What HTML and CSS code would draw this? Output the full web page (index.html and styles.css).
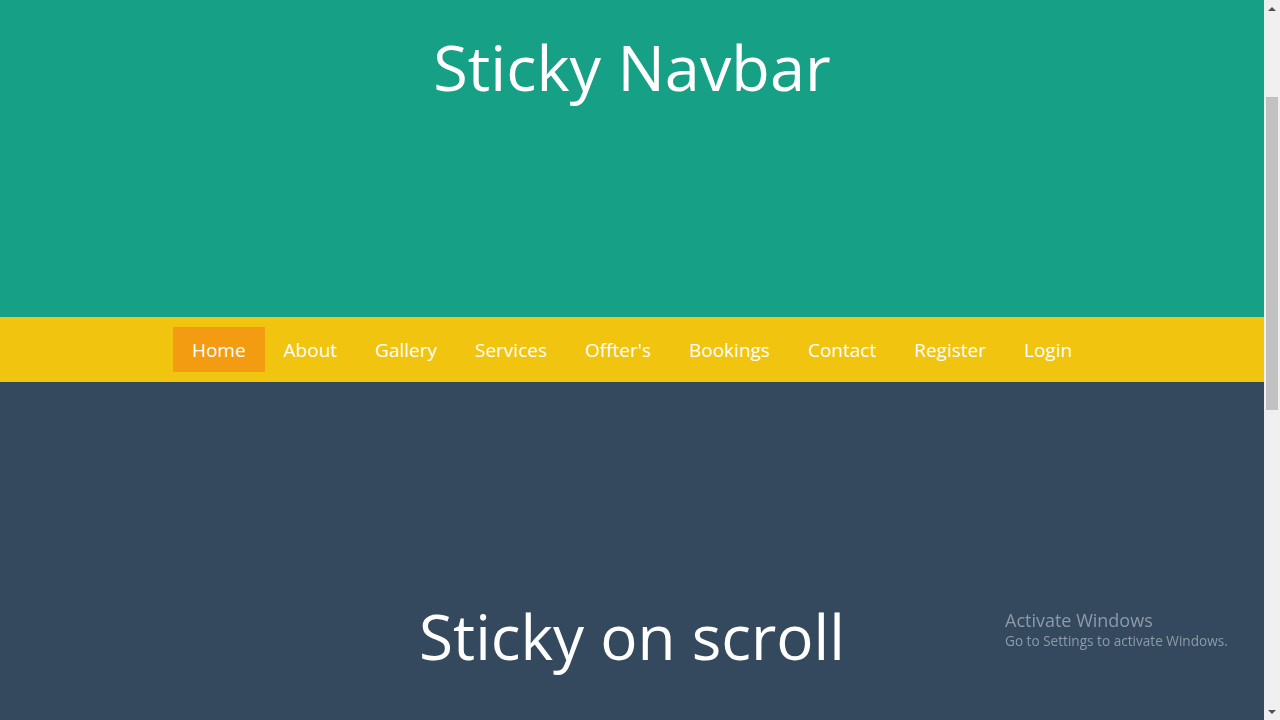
FILE: index.html
```html
<!DOCTYPE html>
<html lang="en">
<head>
<meta charset="utf-8">
<title>Sticky Navbar</title>
<link rel="stylesheet" href="styles.css">
</head>
<body>
<div class="page">
  <main class="main">
    <header class="hero">
      <h1 class="hero-title">Sticky Navbar</h1>
    </header>
    <nav class="navbar">
      <a class="nav-link active" href="#">Home</a>
      <a class="nav-link" href="#">About</a>
      <a class="nav-link" href="#">Gallery</a>
      <a class="nav-link" href="#">Services</a>
      <a class="nav-link" href="#">Offter's</a>
      <a class="nav-link" href="#">Bookings</a>
      <a class="nav-link" href="#">Contact</a>
      <a class="nav-link" href="#">Register</a>
      <a class="nav-link" href="#">Login</a>
    </nav>
    <section class="content">
      <h2 class="content-title">Sticky on scroll</h2>
    </section>
  </main>
  <aside class="scrollbar">
    <div class="sb-arrow sb-up"></div>
    <div class="sb-track">
      <div class="sb-thumb"></div>
    </div>
    <div class="sb-arrow sb-down"></div>
  </aside>
</div>
<div class="watermark">
  <div class="wm-title">Activate Windows</div>
  <div class="wm-sub">Go to Settings to activate Windows.</div>
</div>
</body>
</html>
```
FILE: styles.css
```css
html, body {
  margin: 0;
  padding: 0;
  height: 100%;
  overflow: hidden;
}
body {
  font-family: "Comic Sans MS", "Open Sans", "DejaVu Sans", sans-serif;
}
.page {
  display: flex;
  height: 720px;
  width: 1280px;
}
.main {
  flex: 1;
  display: flex;
  flex-direction: column;
  overflow: hidden;
}
.hero {
  background: #16a085;
  height: 317px;
  display: flex;
  justify-content: center;
}
.hero-title {
  margin: 25px 0 0;
  color: #fff;
  font-size: 63px;
  font-weight: 400;
  line-height: 84px;
  height: 84px;
}
.navbar {
  background: #f1c40f;
  height: 65px;
  box-sizing: border-box;
  padding: 10px 0;
  display: flex;
  justify-content: center;
}
.nav-link {
  display: block;
  color: #fff;
  text-decoration: none;
  font-size: 19px;
  line-height: 46px;
  height: 45px;
  padding: 0 19px;
}
.nav-link.active {
  background: #f39c12;
}
.content {
  background: #34495e;
  flex: 1;
  display: flex;
  justify-content: center;
}
.content-title {
  margin: 212px 0 0;
  color: #fff;
  font-size: 62px;
  font-weight: 400;
  line-height: 84px;
  height: 84px;
}
.scrollbar {
  width: 16px;
  background: #f0f0f0;
  display: flex;
  flex-direction: column;
  align-items: center;
}
.sb-arrow {
  height: 17px;
  width: 16px;
  display: flex;
  align-items: center;
  justify-content: center;
}
.sb-up::before {
  content: "";
  border-left: 4px solid transparent;
  border-right: 4px solid transparent;
  border-bottom: 4px solid #505050;
}
.sb-down::before {
  content: "";
  border-left: 4px solid transparent;
  border-right: 4px solid transparent;
  border-top: 4px solid #505050;
}
.sb-track {
  flex: 1;
  width: 100%;
  display: flex;
  justify-content: center;
  padding-top: 80px;
  box-sizing: border-box;
}
.sb-thumb {
  width: 12px;
  height: 313px;
  background: #c1c1c1;
}
.watermark {
  position: fixed;
  left: 1005px;
  top: 608px;
  font-family: "Segoe UI", "Open Sans", "DejaVu Sans", sans-serif;
  color: #8d9aa9;
}
.wm-title {
  font-size: 18px;
  line-height: 24px;
}
.wm-sub {
  font-size: 13.6px;
  line-height: 18px;
}
```
